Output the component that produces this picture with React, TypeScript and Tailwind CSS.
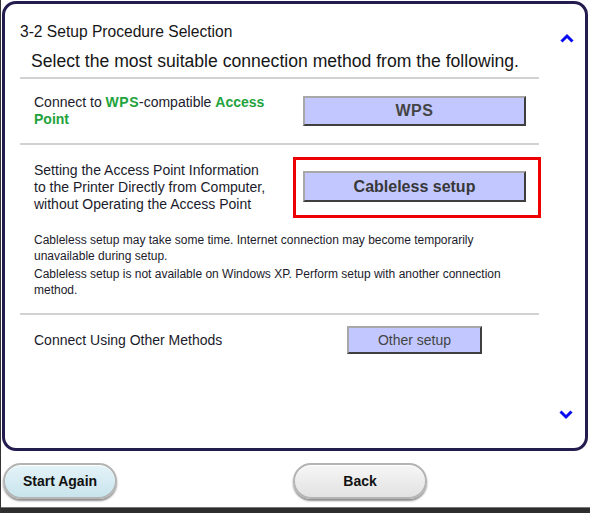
import React from "react";

const Chevron = ({ up }: { up?: boolean }) => (
  <svg width="14" height="10" viewBox="0 0 14 10">
    <polyline
      points={up ? "1.5,8.5 7,3 12.5,8.5" : "1.5,1.5 7,7 12.5,1.5"}
      fill="none"
      stroke="#0a0af0"
      strokeWidth="3"
    />
  </svg>
);

const Divider = () => <div className="h-[2px] w-[519px] bg-[#d2d2d2]" />;

export default function App() {
  return (
    <div className="flex h-[513px] w-[590px] flex-col overflow-hidden border-l border-[#333] bg-white font-['Liberation_Sans',Arial,sans-serif] text-[#161616]">
      {/* Main panel */}
      <div className="relative ml-[1px] mt-[1px] h-[450px] w-[586px] rounded-[14px] border-[3px] border-[#231c4f] pl-[15px] pt-[18px]">
        <div className="absolute right-[11px] top-[29px]">
          <Chevron up />
        </div>
        <div className="absolute bottom-[28px] right-[12px]">
          <Chevron />
        </div>

        <div className="h-[20px] whitespace-nowrap text-[15.6px] leading-[20px]">3-2 Setup Procedure Selection</div>
        <div className="mt-[7px] h-[24px] whitespace-nowrap pl-[11px] text-[17.6px] leading-[24px]">
          Select the most suitable connection method from the following.
        </div>
        <div className="mt-[4px]">
          <Divider />
        </div>

        {/* Row 1 */}
        <div className="flex h-[64px] items-center text-[#1b1b2b]">
          <div className="w-[283px] pl-[14px] text-[14px] leading-[17px]">
            Connect to <span className="font-bold tracking-[0.5px] text-[#22a33c]">WPS</span>-compatible{" "}
            <span className="font-bold text-[#22a33c]">Access</span>
            <br />
            <span className="font-bold text-[#22a33c]">Point</span>
          </div>
          <div className="flex h-[30px] w-[223px] items-center justify-center border-2 border-b-[#3f3f3f] border-l-[#a8a8a8] border-r-[#3f3f3f] border-t-[#a8a8a8] bg-[#c2c8ff] text-[16px] font-bold tracking-[0.5px] text-[#444]">
            WPS
          </div>
        </div>
        <Divider />

        {/* Row 2 */}
        <div className="h-[168px] text-[#1b1b2b]">
          <div className="flex items-center pt-[12px]">
            <div className="w-[273px] whitespace-nowrap pl-[14px] text-[14px] leading-[17px]">
              Setting the Access Point Information
              <br />
              to the Printer Directly from Computer,
              <br />
              without Operating the Access Point
            </div>
            <div className="h-[61px] w-[248px] border-[3px] border-[#ee0000] pl-[7px] pt-[11px]">
              <div className="flex h-[31px] w-[223px] items-center justify-center border-2 border-b-[#3f3f3f] border-l-[#a8a8a8] border-r-[#3f3f3f] border-t-[#a8a8a8] bg-[#c2c8ff] text-[16px] font-bold text-[#383838]">
                Cableless setup
              </div>
            </div>
          </div>
          <div className="mt-[14px] whitespace-nowrap pl-[14px] text-[12px] leading-[16px]">
            <p>
              Cableless setup may take some time. Internet connection may become temporarily
              <br />
              unavailable during setup.
            </p>
            <p className="mt-[2px]">
              Cableless setup is not available on Windows XP. Perform setup with another connection
              <br />
              method.
            </p>
          </div>
        </div>
        <Divider />

        {/* Row 3 */}
        <div className="flex items-center pt-[11px] text-[#1b1b2b]">
          <div className="w-[327px] pl-[14px] text-[14px] leading-[17px]">Connect Using Other Methods</div>
          <div className="flex h-[28px] w-[135px] items-center justify-center border-2 border-b-[#3f3f3f] border-l-[#a8a8a8] border-r-[#3f3f3f] border-t-[#a8a8a8] bg-[#c2c8ff] text-[14px] text-[#444]">
            Other setup
          </div>
        </div>
      </div>

      {/* Bottom buttons */}
      <div className="mt-[12px] flex h-[36px] items-center">
        <div className="ml-[2px] flex h-[36px] w-[114px] items-center justify-center rounded-full border-2 border-[#b4b4b4] bg-gradient-to-b from-[#e4f3f8] to-[#c9e4ed] text-[14px] font-bold text-[#111] shadow-[0_2px_2px_rgba(0,0,0,0.45),inset_0_1px_0_#fff]">
          Start Again
        </div>
        <div className="ml-[176px] flex h-[36px] w-[134px] items-center justify-center rounded-full border-2 border-[#b4b4b4] bg-gradient-to-b from-[#f6f6f6] to-[#e2e2e2] text-[14px] font-bold text-[#111] shadow-[0_2px_2px_rgba(0,0,0,0.45),inset_0_1px_0_#fff]">
          Back
        </div>
      </div>

      <div className="mt-[8px] h-[6px] border-t border-[#777] bg-[#2e2e2e]" />
    </div>
  );
}
